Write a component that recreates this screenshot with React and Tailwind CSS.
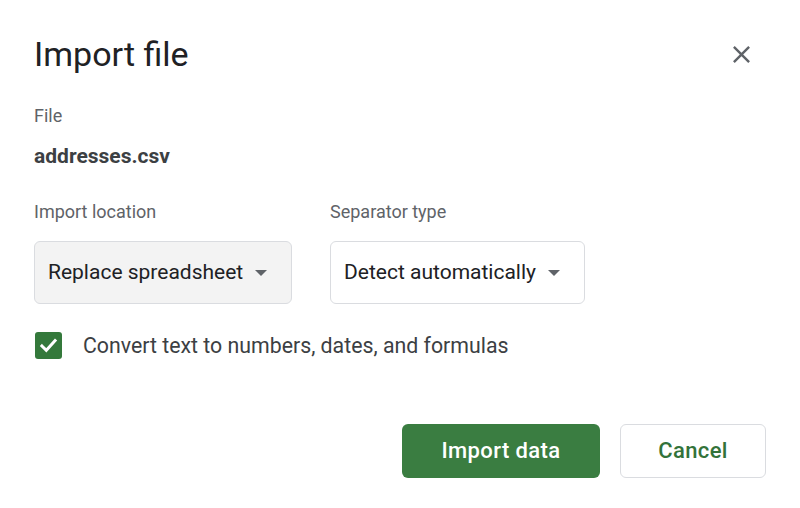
export default function App() {
  return (
    <div className="w-[800px] h-[508px] bg-white px-[34px] pt-[32px] font-['Roboto',sans-serif] text-[#202124]">
      <div className="flex h-[44px] items-center justify-between">
        <h1 className="text-[34px] leading-[44px] font-normal text-[#202124]">Import file</h1>
        <button className="mr-[10px] text-[#5f6368]" aria-label="Close">
          <svg width="29" height="29" viewBox="0 0 24 24" fill="currentColor">
            <path d="M19 6.41 17.59 5 12 10.59 6.41 5 5 6.41 10.59 12 5 17.59 6.41 19 12 13.41 17.59 19 19 17.59 13.41 12z" />
          </svg>
        </button>
      </div>

      <div className="mt-[28px] text-[18px] leading-[24px] text-[#5f6368]">File</div>
      <div className="mt-[15px] text-[21px] leading-[26px] font-bold text-[#3c4043]">addresses.csv</div>

      <div className="mt-[31px] flex gap-[38px]">
        <div>
          <div className="text-[18px] leading-[24px] text-[#5f6368]">Import location</div>
          <div className="mt-[17px] flex h-[63px] w-[258px] items-center rounded-[6px] border border-[#dadce0] bg-[#f3f3f3] pl-[13px]">
            <span className="text-[21px] text-[#202124]">Replace spreadsheet</span>
            <span className="ml-[12px] mt-[1px] h-0 w-0 border-x-[6px] border-t-[6px] border-x-transparent border-t-[#5f6368]" />
          </div>
        </div>
        <div>
          <div className="text-[18px] leading-[24px] text-[#5f6368]">Separator type</div>
          <div className="mt-[17px] flex h-[63px] w-[255px] items-center rounded-[6px] border border-[#dadce0] bg-white pl-[13px]">
            <span className="text-[21px] text-[#202124]">Detect automatically</span>
            <span className="ml-[12px] mt-[1px] h-0 w-0 border-x-[6px] border-t-[6px] border-x-transparent border-t-[#5f6368]" />
          </div>
        </div>
      </div>

      <label className="mt-[26px] flex items-center gap-[21px] pl-[1px]">
        <span className="flex h-[27px] w-[27px] items-center justify-center rounded-[3px] bg-[#34793b]">
          <svg width="21" height="21" viewBox="0 0 24 24" fill="none" stroke="white" strokeWidth="3.4" strokeLinecap="square">
            <path d="M4.5 12.5 9.5 17.5 19.5 6.5" />
          </svg>
        </span>
        <span className="text-[21.3px] text-[#3c4043]">Convert text to numbers, dates, and formulas</span>
      </label>

      <div className="mt-[62px] flex justify-end gap-[20px]">
        <button className="h-[54px] w-[198px] rounded-[6px] bg-[#3a7d41] text-[22px] tracking-[0.4px] font-medium text-white">
          Import data
        </button>
        <button className="h-[54px] w-[146px] rounded-[6px] border border-[#dadce0] bg-white text-[22px] tracking-[0.4px] font-medium text-[#33733a]">
          Cancel
        </button>
      </div>
    </div>
  );
}
